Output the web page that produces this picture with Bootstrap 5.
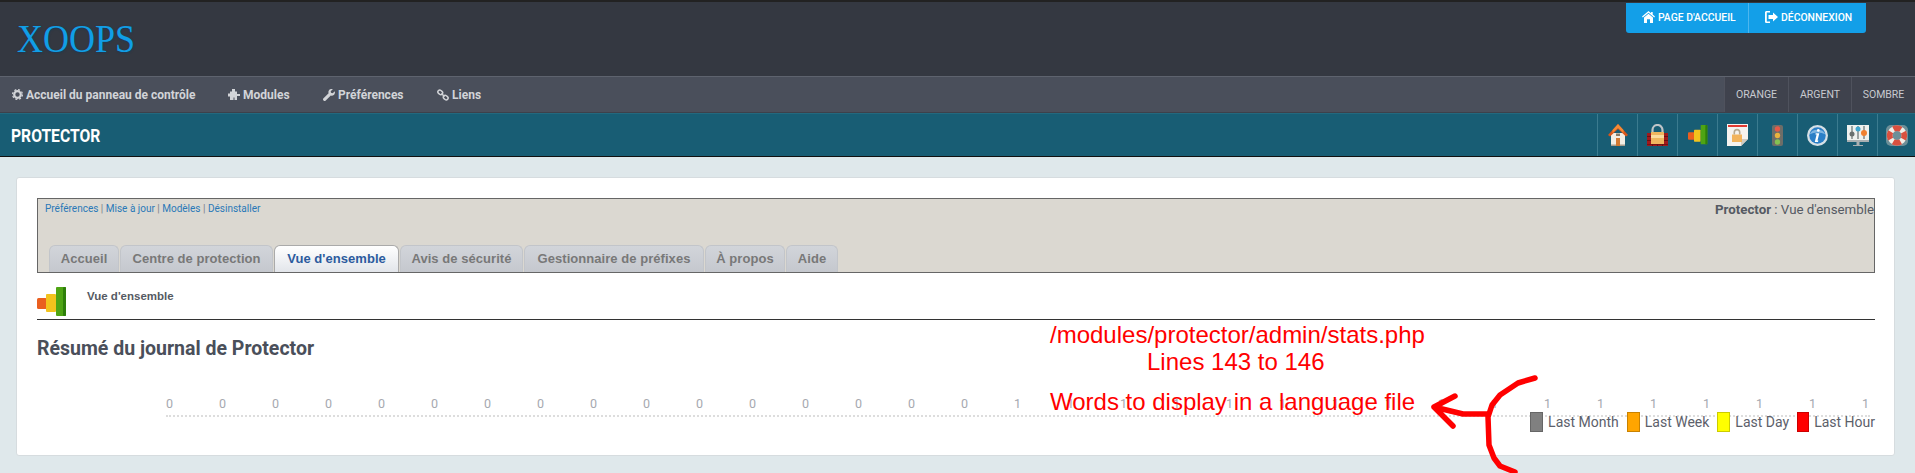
<!DOCTYPE html>
<html lang="fr">
<head>
<meta charset="utf-8">
<title>Protector</title>
<link href="https://cdn.jsdelivr.net/npm/bootstrap@5.3.0/dist/css/bootstrap.min.css" rel="stylesheet">
<style>
html,body{height:473px;overflow:hidden}
body{background:#dfe8eb;font-family:Roboto,"Liberation Sans",sans-serif;color:#4a4f5a;position:relative}
.hdr{height:76px;background:#343841;border-top:2px solid #222;padding-left:17px;padding-right:49px}
.logo{font-family:"Liberation Serif",serif;font-size:40px;line-height:1;color:#119ee6;margin-top:17px;text-shadow:0 1px 2px #1b3a55;transform:scaleX(.9);transform-origin:left center}
.topbtns{height:30px;margin-top:1px;border-radius:0 0 3px 3px;overflow:hidden}
.topbtn{height:30px;background:#139fe8;color:#fff;font-size:10.4px;font-weight:500;text-transform:uppercase;text-decoration:none;display:flex;align-items:center;gap:3px}
.topbtn svg{margin-top:-3px}
.tb1{width:123px;padding-left:16px;border-right:1px solid #4db6ee}
.tb2{width:117px;padding-left:16px}
.mainnav{height:37px;background:#4a4f5b;border-top:1px solid #5e636e;border-bottom:1px solid #3d414b}
.navlink{color:#d2d4d8;font-size:12px;font-weight:700;text-decoration:none;display:flex;align-items:center;gap:3px}
.nl1{margin-left:12px;width:216px}
.nl2{width:95px}
.nl3{width:114px}
.themes{height:100%;background:#3f424d}
.themelink{height:100%;color:#c8cad0;font-size:10.5px;text-transform:uppercase;text-decoration:none;display:flex;align-items:center;justify-content:center;border-left:1px solid #4f525d}
.th1{width:64px}
.th2{width:63px}
.th3{width:64px}
.modbar{height:44px;background:#185d74;border-top:1px solid #23697f;border-bottom:1px solid #111}
.modtitle{font-size:18px;line-height:22px;font-weight:700;color:#fff;margin:1px 0 0 11px;transform:scaleX(.87);transform-origin:left center}
.toolcell{width:40px;height:100%;border-left:1px solid #3b7b8f;display:flex;align-items:center;justify-content:center}
.toolend{width:38px}
.pagewrap{padding:20px 20px 0 16px}
.maincard{height:279px;background:#fff;border:1px solid #d6dcdf;border-radius:3px;padding:20px 19px 0 20px}
.adminbox{height:75px;background:#dbd8d1;border:1px solid #666;position:relative}
.adminlinks{font-size:10px;line-height:1;color:#7a8089;padding:5px 0 0 7px}
.adminlinks a{color:#2a78b8;text-decoration:none}
.crumb{font-size:13.3px;line-height:1;color:#555a63;padding-top:4px;white-space:nowrap}
.tabrow{padding-left:11px;gap:1px;height:27px}
.tabitem{height:27px;margin-top:auto;background:linear-gradient(#d2d5da,#c5c8ce);border:1px solid #c2c5ca;border-bottom:0;border-radius:6px 6px 0 0;color:#787878;font-family:"Liberation Sans",sans-serif;font-size:13px;font-weight:700;text-decoration:none;display:flex;align-items:center;justify-content:center;letter-spacing:.05px}
.tabon{background:linear-gradient(#fff,#e2e5ea);color:#2c5b9e;border-color:#aaa}
.subhead{height:47px;border-bottom:1px solid #333;padding-top:14px}
.subtitle{font-family:"Liberation Sans",sans-serif;font-size:11.5px;line-height:18px;font-weight:700;color:#555a63;margin-left:20px}
.logtitle{font-size:19.5px;font-weight:700;color:#4a4f5a;margin:18px 0 0;line-height:22px}
.chartrow{margin:36px 0 0 106px;width:1749px}
.chartcol{width:53px;text-align:center;font-size:12.5px;line-height:16px;color:#a6a9b0;flex:none}
.chartline{border-top:2px dotted #ddd;margin:3px 0 0 129px;width:1704px}
.legendrow{gap:8px;font-size:14px;color:#5c606a;margin-top:-5px;line-height:20px}
.legenditem{display:flex;align-items:center;gap:5px}
.swatch{display:block;height:20px;border:1px solid}
.annot{position:absolute;color:#f00;font-family:"Liberation Sans",sans-serif;font-size:24px;line-height:1;white-space:nowrap;margin:0}
.an1{left:1050px;top:323px}
.an2{left:1147px;top:350px}
.an3{left:1050px;top:390px}
.scribble{position:absolute;left:1420px;top:370px}
</style>
</head>
<body>
<header class="hdr d-flex justify-content-between align-items-start">
  <div class="logo">XOOPS</div>
  <div class="topbtns d-flex">
    <a class="topbtn tb1" href="#"><svg width="13" height="12" viewBox="0 0 13 12"><path fill="#fff" d="M6.5 0 0 5.6l.8.9L6.5 1.7l5.7 4.8.8-.9-2.3-2V1h-1.6v1.2zM2 6.6V12h3V8.3h3V12h3V6.6L6.5 2.8z"/></svg>Page d'accueil</a>
    <a class="topbtn tb2" href="#"><svg width="13" height="12" viewBox="0 0 13 12"><path fill="#fff" d="M5 0H1.6C.7 0 0 .7 0 1.6v8.8C0 11.3.7 12 1.6 12H5v-1.6H1.8V1.6H5zM8 1.4V4H3.5v4H8v2.6L13 6z"/></svg>Déconnexion</a>
  </div>
</header>
<nav class="mainnav d-flex justify-content-between align-items-center">
  <div class="d-flex">
    <a class="navlink nl1" href="#"><svg width="11" height="11" viewBox="0 0 11 11"><circle cx="5.5" cy="5.5" r="3.3" fill="none" stroke="#d2d4d8" stroke-width="2.2"/><circle cx="5.5" cy="5.5" r="4.9" fill="none" stroke="#d2d4d8" stroke-width="1.3" stroke-dasharray="2 1.85"/></svg>Accueil du panneau de contrôle</a>
    <a class="navlink nl2" href="#"><svg width="12" height="11" viewBox="0 0 12 11"><path fill="#d2d4d8" d="M4 0h3v2.5h2V5h3v2H9v4H6.5V8.500h-1V11H2V7.500H0V4.500h2V2.500h2z"/></svg>Modules</a>
    <a class="navlink nl3" href="#"><svg width="12" height="12" viewBox="0 0 12 12"><path fill="#d2d4d8" d="M11.800 2.200 9.700 4.200 8 3.800 7.700 2.200 9.800.2C8.300-.3 6.700.1 6 1.200c-.7.900-.8 2-.4 3L.3 9.500c-.5.500-.4 1.200 0 1.700l.5.5c.5.400 1.200.4 1.700 0l5.300-5.200c1 .4 2.100.2 3-.5 1-.9 1.400-2.400 1-3.800z"/></svg>Préférences</a>
    <a class="navlink" href="#"><svg width="12" height="12" viewBox="0 0 12 12" fill="none" stroke="#d2d4d8" stroke-width="1.500"><rect x=".8" y="1.500" width="5" height="3.700" rx="1.800" transform="rotate(40 3.300 3.300)"/><rect x="6.200" y="6.800" width="5" height="3.700" rx="1.800" transform="rotate(40 8.700 8.700)"/><path d="M4.500 4.500 7.500 7.500"/></svg>Liens</a>
  </div>
  <div class="themes d-flex">
    <a class="themelink th1" href="#">Orange</a>
    <a class="themelink th2" href="#">Argent</a>
    <a class="themelink th3" href="#">Sombre</a>
  </div>
</nav>
<div class="modbar d-flex justify-content-between align-items-center">
  <div class="modtitle">PROTECTOR</div>
  <div class="d-flex h-100">
    <div class="toolcell"><svg width="20" height="22" viewBox="0 0 20 22"><path fill="#f3eee4" d="M3 9h14v13H3z"/><path fill="#a89d8d" d="M3 20.500h14V22H3z"/><path fill="#d9561a" d="M10 0 0 11l2 1.500L10 5l8 7.500 2-1.500z"/><path fill="#f58a35" d="M10 0 4.500 6v3L10 4l5.500 5V6z"/><path fill="#d27a33" d="M8 14h4v8H8z"/><path fill="#8b7a64" d="M8 9.500h4V12H8z"/></svg></div>
    <div class="toolcell"><svg width="21" height="22" viewBox="0 0 21 22"><path fill="none" stroke="#c0c4c8" stroke-width="2.200" d="M5.500 10V6a5 5 0 0 1 10 0v4"/><path fill="#a01a1d" d="M0 9h21v13H0z"/><path fill="#6b0f12" d="M0 12h4v1H0zM17 12h4v1h-4zM0 16h4v1H0zM17 16h4v1h-4zM0 20h21v.700H0zM5 20.500h1V22H5zM10 20.500h1V22h-1zM15 20.500h1V22h-1z"/><path fill="#efb65f" d="M4 8h13v12H4z"/><path fill="#fbdc9e" d="M4 11h13v3H4z"/></svg></div>
    <div class="toolcell"><svg width="20" height="20" viewBox="0 0 30 30"><rect y="11" width="10" height="11" rx="1.500" fill="#ea5f1f"/><rect x="9" y="7" width="10" height="18" rx="1" fill="#f2c31d"/><rect x="19" width="10" height="29" rx="1" fill="#4ea414"/><rect x="26" width="3" height="29" rx="1" fill="#2e7f0a"/></svg></div>
    <div class="toolcell"><svg width="21" height="22" viewBox="0 0 21 22"><path fill="#f5f3ef" d="M0 0h21v15l-7 7H0z"/><path fill="#cfcac0" d="m14 22 7-7h-7z"/><path fill="#e13a32" d="M1 1h19v2H1z"/><path fill="#f2b45c" d="M5 10.500h10V18H5z"/><path fill="none" stroke="#b7a98f" stroke-width="1.600" d="M7.300 10.500V8.300a2.700 2.700 0 0 1 5.400 0v2.200"/></svg></div>
    <div class="toolcell"><svg width="11" height="21" viewBox="0 0 11 21"><rect width="11" height="21" rx="2" fill="#6e6d68"/><circle cx="5.500" cy="4" r="2.700" fill="#e35a48"/><circle cx="5.500" cy="10.500" r="2.700" fill="#e9b23e"/><circle cx="5.500" cy="17" r="2.700" fill="#84c152"/></svg></div>
    <div class="toolcell"><svg width="21" height="21" viewBox="0 0 23 23"><circle cx="11.500" cy="11.500" r="11.500" fill="#d6e0e6"/><circle cx="11.500" cy="11.500" r="9" fill="#2b7fc7"/><path fill="#7fb6e2" d="M3 10a9 7 0 0 1 17 0 12 6 0 0 0-17 0z"/><path fill="#fff" d="M12.500 4.500a1.500 1.500 0 1 1-.1 3 1.500 1.500 0 0 1 .1-3zM9.500 9h4l-2 8h1l-.5 1.500h-3.500l2-8h-1.300z"/></svg></div>
    <div class="toolcell"><svg width="22" height="21" viewBox="0 0 22 21"><path fill="#eef1ef" d="M0 0h22v15H0z"/><path fill="#a9b0b2" d="M0 15h22v2H0zM9.500 17h3v3h-3zM6 20h10v1H6z"/><path stroke="#68706f" stroke-width="1.200" d="M5 1v13M11 1v13M17 1v13"/><circle cx="5" cy="9" r="2.500" fill="#68706f"/><circle cx="11" cy="4" r="2.500" fill="#3ea5cf"/><circle cx="17" cy="8" r="3" fill="#f08030"/></svg></div>
    <div class="toolcell toolend"><svg width="22" height="21" viewBox="0 0 22 21"><rect width="22" height="21" rx="5" fill="#6d8f98"/><circle cx="11" cy="10.500" r="7.300" fill="none" stroke="#f0eee8" stroke-width="5.500"/><circle cx="11" cy="10.500" r="7.300" fill="none" stroke="#d9503f" stroke-width="5.700" stroke-dasharray="7.700 3.770" stroke-dashoffset="3.850"/></svg></div>
  </div>
</div>
<main class="pagewrap">
  <section class="maincard">
    <div class="adminbox d-flex flex-column">
      <div class="d-flex justify-content-between">
        <div class="adminlinks"><a href="#">Préférences</a> | <a href="#">Mise à jour</a> | <a href="#">Modèles</a> | <a href="#">Désinstaller</a></div>
        <div class="crumb"><b>Protector</b> : Vue d'ensemble</div>
      </div>
      <div class="tabrow d-flex mt-auto">
        <a class="tabitem" style="width:70px" href="#">Accueil</a>
        <a class="tabitem" style="width:153px" href="#">Centre de protection</a>
        <a class="tabitem tabon" style="width:125px" href="#">Vue d'ensemble</a>
        <a class="tabitem" style="width:123px" href="#">Avis de sécurité</a>
        <a class="tabitem" style="width:180px" href="#">Gestionnaire de préfixes</a>
        <a class="tabitem" style="width:80px" href="#">À propos</a>
        <a class="tabitem" style="width:52px" href="#">Aide</a>
      </div>
    </div>
    <div class="subhead d-flex align-items-start">
      <svg width="30" height="30" viewBox="0 0 30 30"><rect y="11" width="10" height="11" rx="1.500" fill="#ea5f1f"/><rect x="9" y="7" width="10" height="18" rx="1" fill="#f2c31d"/><rect x="19" width="10" height="29" rx="1" fill="#4ea414"/><rect x="26" width="3" height="29" rx="1" fill="#2e7f0a"/></svg>
      <div class="subtitle">Vue d'ensemble</div>
    </div>
    <h3 class="logtitle">Résumé du journal de Protector</h3>
    <div class="chartrow d-flex">
      <div class="chartcol">0</div><div class="chartcol">0</div><div class="chartcol">0</div><div class="chartcol">0</div><div class="chartcol">0</div><div class="chartcol">0</div><div class="chartcol">0</div><div class="chartcol">0</div><div class="chartcol">0</div><div class="chartcol">0</div><div class="chartcol">0</div><div class="chartcol">0</div><div class="chartcol">0</div><div class="chartcol">0</div><div class="chartcol">0</div><div class="chartcol">0</div>
      <div class="chartcol">1</div><div class="chartcol">1</div><div class="chartcol">1</div><div class="chartcol">1</div><div class="chartcol">1</div><div class="chartcol">1</div><div class="chartcol">1</div><div class="chartcol">1</div><div class="chartcol">1</div><div class="chartcol">1</div><div class="chartcol">1</div><div class="chartcol">1</div><div class="chartcol">1</div><div class="chartcol">1</div><div class="chartcol">1</div><div class="chartcol">1</div><div class="chartcol">1</div>
    </div>
    <div class="chartline"></div>
    <div class="legendrow d-flex justify-content-end">
      <div class="legenditem"><span class="swatch" style="width:13px;background:#808080;border-color:#666"></span>Last Month</div>
      <div class="legenditem"><span class="swatch" style="width:13px;background:#ffa500;border-color:#c98200"></span>Last Week</div>
      <div class="legenditem"><span class="swatch" style="width:13px;background:#ff0;border-color:#cc0"></span>Last Day</div>
      <div class="legenditem"><span class="swatch" style="width:12px;background:#f00;border-color:#c00"></span>Last Hour</div>
    </div>
  </section>
</main>
<p class="annot an1">/modules/protector/admin/stats.php</p>
<p class="annot an2">Lines 143 to 146</p>
<p class="annot an3">Words to display in a language file</p>
<svg class="scribble" width="130" height="103" viewBox="1420 370 130 103" fill="none" stroke="#f00" stroke-width="5.500" stroke-linecap="round" stroke-linejoin="round"><path d="M1455 396 1434 407 1453 426M1434 407 1463 414H1487"/><path d="M1535 378 1518 383 1500 395 1492 405 1488 417 1489 445 1494 458 1500 466 1515 472"/></svg>
<script src="https://cdn.jsdelivr.net/npm/bootstrap@5.3.0/dist/js/bootstrap.bundle.min.js"></script>
</body>
</html>
